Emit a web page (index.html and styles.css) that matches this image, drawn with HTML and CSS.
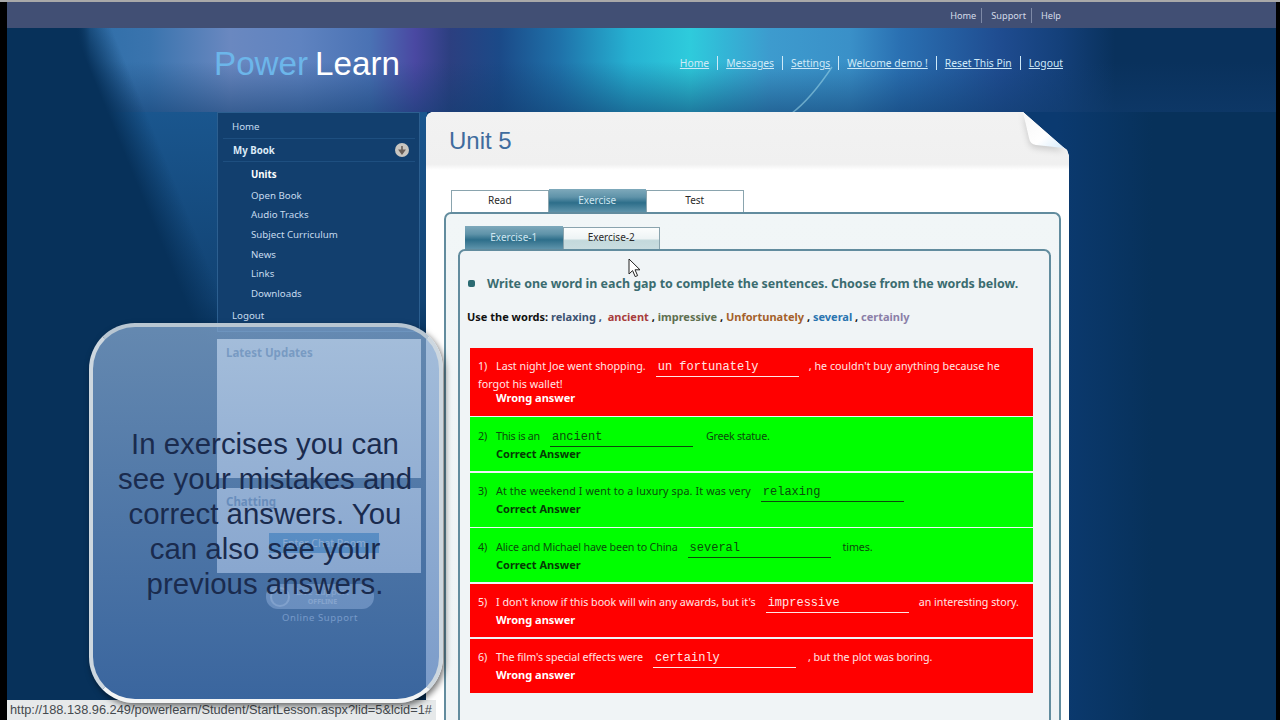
FILE: index.html
```html
<!DOCTYPE html>
<html lang="en">
<head>
<meta charset="utf-8">
<title>PowerLearn</title>
<link rel="stylesheet" href="styles.css">
</head>
<body>
<div class="screen">
  <div class="page">
    <div class="topbar">
      <a>Home</a><i></i><a>Support</a><i></i><a>Help</a>
    </div>
    <header class="header">
      <div class="logo"><span class="logo-a">Power</span><span class="logo-b">Learn</span></div>
      <nav class="nav">
        <a>Home</a><i></i><a>Messages</a><i></i><a>Settings</a><i></i><a>Welcome demo !</a><i></i><a>Reset This Pin</a><i></i><a>Logout</a>
      </nav>
      <svg class="streak" width="50" height="50" viewBox="0 0 50 50"><path d="M2 48C18 36 30 20 42 2" stroke="#9fd8ea" stroke-opacity=".55" stroke-width="1.4" fill="none"/></svg>
    </header>
    <div class="content">
      <aside class="side">
        <div class="menu">
          <div class="menu-item">Home</div>
          <div class="menu-open">My Book
            <svg class="down" width="14" height="14" viewBox="0 0 14 14"><circle cx="7" cy="7" r="7" fill="#c9c6c0"/><path d="M7 3v6M4.6 7.2 7 10.6l2.4-3.4z" stroke="#6a5f58" stroke-width="1.6" fill="#6a5f58"/></svg>
          </div>
          <ul class="sub">
            <li class="cur">Units</li>
            <li>Open Book</li>
            <li>Audio Tracks</li>
            <li>Subject Curriculum</li>
            <li>News</li>
            <li>Links</li>
            <li>Downloads</li>
          </ul>
          <div class="menu-item">Logout</div>
        </div>
        <section class="box updates"><h3>Latest Updates</h3></section>
        <section class="box chat"><h3>Chatting</h3><div class="chat-btn">Enter Chat Room</div></section>
        <div class="live">
          <div class="pill"><span class="ring"></span><span class="pill-t"><b>Live Support</b><small>OFFLINE</small></span></div>
          <div class="live-cap">Online Support</div>
        </div>
      </aside>
      <main class="main">
        <svg class="fold" width="46" height="44" viewBox="0 0 46 44"><defs><linearGradient id="f" x1="0" y1="0" x2="1" y2="1"><stop offset="0" stop-color="#f7f7f7"/><stop offset=".6" stop-color="#fff"/><stop offset="1" stop-color="#d6ebfb"/></linearGradient></defs><path d="M0 0 6 26Q7 32 13 33L41 36Z" fill="url(#f)"/></svg>
        <div class="title"><h1>Unit 5</h1></div>
        <div class="tabs">
          <div class="tab">Read</div><div class="tab on">Exercise</div><div class="tab">Test</div>
        </div>
        <div class="outer">
          <div class="tabs2">
            <div class="tab2 on">Exercise-1</div><div class="tab2">Exercise-2</div>
          </div>
          <div class="inner">
            <div class="lead"><span class="bullet"></span>Write one word in each gap to complete the sentences. Choose from the words below.</div>
            <p class="words">Use the words: <span class="w1">relaxing ,</span>&nbsp; <span class="w2">ancient</span> , <span class="w3">impressive</span> , <span class="w4">Unfortunately</span> , <span class="w5">several</span> , <span class="w6">certainly</span></p>
            <div class="row bad r1">
              <p><span class="n">1)</span>Last night Joe went shopping.<span class="gap">un fortunately</span>, he couldn't buy anything because he forgot his wallet!</p>
              <div class="ans">Wrong answer</div>
            </div>
            <div class="row ok r2">
              <p><span class="n">2)</span>This is an<span class="gap">ancient</span>Greek statue.</p>
              <div class="ans">Correct Answer</div>
            </div>
            <div class="row ok r3">
              <p><span class="n">3)</span>At the weekend I went to a luxury spa. It was very<span class="gap">relaxing</span></p>
              <div class="ans">Correct Answer</div>
            </div>
            <div class="row ok r4">
              <p><span class="n">4)</span>Alice and Michael have been to China<span class="gap">several</span>times.</p>
              <div class="ans">Correct Answer</div>
            </div>
            <div class="row bad">
              <p><span class="n">5)</span>I don't know if this book will win any awards, but it's<span class="gap">impressive</span>an interesting story.</p>
              <div class="ans">Wrong answer</div>
            </div>
            <div class="row bad r6">
              <p><span class="n">6)</span>The film's special effects were<span class="gap">certainly</span>, but the plot was boring.</p>
              <div class="ans">Wrong answer</div>
            </div>
          </div>
        </div>
      </main>
    </div>
  </div>
  <div class="status">http://188.138.96.249/powerlearn/Student/StartLesson.aspx?lid=5&amp;lcid=1#</div>
  <div class="callout"><p>In exercises you can see your mistakes and correct answers. You can also see your previous answers.</p></div>
  <svg class="cursor" width="13" height="20" viewBox="0 0 13 20"><path d="M1 1v15l3.6-3.4 2.6 6 2.4-1-2.6-5.8H12z" fill="#fff" stroke="#222" stroke-width="1"/></svg>
</div>
</body>
</html>
```
FILE: styles.css
```css
* { box-sizing: border-box; }
html, body { margin: 0; padding: 0; background: #000; }
.screen {
  position: relative; width: 1280px; height: 720px; overflow: hidden;
  background: #000; padding: 2px 4px 0 7px;
  font-family: "Noto Sans", "Liberation Sans", sans-serif;
}
.screen::before { content: ""; position: absolute; left: 0; right: 0; top: 0; height: 2px; background: #a9a9a9; }
.page {
  position: relative; height: 718px; overflow: hidden;
  background:
    linear-gradient(67.6deg, #07315a 192px, rgba(7,49,90,0) 228px) 0 26px / 260px 345px no-repeat,
    linear-gradient(180deg, rgba(16,60,110,0) 40%, rgba(16,60,110,.55) 100%) 0 26px / 100% 84px no-repeat,
    linear-gradient(90deg, #07315a 70px, #2f6ea8 83px, #3a74ae 143px, #6a88c0 223px, #5f83c0 293px, #4a72b4 363px, #4a48a2 408px, #2c3f80 443px, #1b4a88 493px, #1f72aa 553px, #26b2d2 623px, #2ecbdc 683px, #33b5d6 718px, #3d9bce 763px, #3a90c8 843px, #2a70b2 893px, #1f4c90 993px, #14407a 1053px, #09315c 1108px) 0 26px / 100% 84px no-repeat,
    linear-gradient(180deg, #1a568e 0, #1a568e 110px, #114272 300px, #07315a 345px) 0 0 / 420px 100% no-repeat,
    linear-gradient(90deg, #0b3a70 1050px, #07315a 1145px);
}
.topbar {
  position: relative; height: 26px; background: #414f74;
  display: flex; align-items: center; justify-content: flex-end;
  padding-right: 215px;
  font-size: 9.2px; color: #d4dbe8;
}
.topbar i { width: 1px; height: 15px; margin: 0 9px 0 5px; background: #7d89a6; }
.header { position: relative; height: 84px; display: flex; align-items: flex-start; padding: 16px 213px 0 207px; }
.streak { position: absolute; left: 783px; top: 37px; }
.logo { display: flex; gap: 7px; font: 33.2px/40px "Liberation Sans", sans-serif; }
.logo-a { color: #6cb6ea; }
.logo-b { color: #fff; }
.nav { margin-left: auto; display: flex; align-items: center; gap: 8px; height: 38px; font-size: 10.3px; color: #cfeaf8; }
.nav a { text-decoration: underline; }
.nav i { width: 1px; height: 14px; background: #cfeaf8; }
.content { position: relative; display: flex; gap: 6px; padding-left: 210px; align-items: flex-start; }
.side { width: 203px; flex: none; }
.menu { width: 203px; height: 220px; background: #123f6e; border: 1px solid #2c5f90; padding-top: 1px; font-size: 9.7px; color: #c6dbee; }
.menu-item { height: 24px; line-height: 25px; padding-left: 14px; }
.menu-open {
  height: 24px; margin: 0 4px 0 5px; padding: 0 6px 0 10px;
  display: flex; align-items: center; justify-content: space-between;
  font-weight: 700; color: #dcebf7;
  border-top: 1px solid #1e4f80; border-bottom: 1px solid #1e4f80;
}
.sub { list-style: none; margin: 0; padding: 3px 0 0 33px; }
.sub li { height: 19.6px; line-height: 19.6px; }
.sub .cur { font-weight: 700; color: #fff; margin-bottom: 1.2px; }
.box { width: 204px; background: #fff; }
.box h3 { margin: 0; font: 700 11.5px/20px "Noto Sans", sans-serif; color: #5f80a6; padding: 4px 0 0 9px; }
.updates { height: 139px; margin-top: 7px; }
.chat { height: 85px; margin-top: 10px; position: relative; }
.chat-btn { margin: 21px 42px 0 52px; height: 20px; background: #368ecc; color: #fff; font-size: 10.5px; line-height: 20px; text-align: center; }
.live { margin: 11px 0 0 49px; width: 108px; }
.pill { height: 25px; border-radius: 12px; background: rgba(200,215,235,.75); display: flex; align-items: center; padding-left: 4px; gap: 6px; }
.ring { width: 20px; height: 20px; border-radius: 50%; border: 2px solid #eef3f9; }
.pill-t { display: flex; flex-direction: column; align-items: center; color: #fff; line-height: 10px; }
.pill-t b { font-size: 9px; font-weight: 400; }
.pill-t small { font-size: 7px; font-weight: 700; }
.live-cap { margin-top: 3px; font-size: 9.5px; line-height: 12px; letter-spacing: .6px; color: #c8d9ec; text-align: center; }
.main {
  position: relative; width: 643px; height: 608px; flex: none; background: #fff;
  padding: 0 8px 0 18px;
  clip-path: polygon(0 6px, 2px 2px, 6px 0, 597px 0, 637px 35px, 641px 38px, 643px 44px, 643px 100%, 0 100%);
}
.fold { position: absolute; left: 597px; top: 0; filter: drop-shadow(0 3px 3px rgba(0,0,0,.16)); }
.title { height: 58px; margin: 0 -8px 0 -18px; padding-left: 23px; background: linear-gradient(180deg, #f2f2f2 0, #f0f0f0 90%, #fff 100%); }
.title h1 { margin: 0; font: 400 24px/58px "Liberation Sans", sans-serif; color: #3f6c9e; }
.tabs { display: flex; margin: 19px 0 0 7px; height: 23px; align-items: flex-end; }
.tab { width: 97.5px; height: 22px; border: 1px solid #8aa4ae; border-bottom: 0; background: #fff; text-align: center; font-size: 10px; line-height: 19px; color: #2a2a2a; }
.tab.on, .tab2.on { height: 23px; border: 0; background: linear-gradient(180deg, #7ea9bb 0, #5f93a9 35%, #2d6e8a 60%, #5e93aa 100%); color: #cfe6f0; line-height: 23px; }
.outer { border: 2px solid #628c9e; border-bottom: 0; border-radius: 7px 7px 0 0; height: 510px; padding: 12px 8px 0 12px; background: linear-gradient(180deg, #f1f6f7, #eef3f5); }
.tabs2 { display: flex; margin-left: 7px; height: 23px; align-items: flex-end; }
.tab2 { width: 97.5px; height: 22px; border: 1px solid #8aa4ae; border-bottom: 0; background: linear-gradient(180deg, #fbfdfd 0, #eef4f5 50%, #c3d9dc 60%, #c9dde0 100%); text-align: center; font-size: 10px; line-height: 19px; color: #2a2a2a; }
.inner { border: 2px solid #628c9e; border-bottom: 0; border-radius: 7px 7px 0 0; height: 480px; padding: 23px 16px 0 10px; background: #f0f4f6; }
.lead { position: relative; height: 20px; margin-left: 17px; font-weight: 700; font-size: 12.45px; line-height: 20px; color: #3b6c70; white-space: nowrap; }
.bullet { position: absolute; left: -19px; top: 6px; width: 7px; height: 7px; border-radius: 2px; background: #2b6a72; }
.words { margin: 13px 0 0 -3px; height: 20px; font-weight: 700; font-size: 11px; line-height: 20px; color: #111; white-space: nowrap; }
.w1 { color: #3d5272; } .w2 { color: #a83c3c; } .w3 { color: #5f7050; }
.w4 { color: #a4602a; } .w5 { color: #2a74b0; } .w6 { color: #8b7fa8; }
.row { margin: 0 0 1.4px; padding: 11.4px 14px 10.6px 8px; font-size: 10.7px; line-height: 14px; }
.words + .row { margin-top: 21px; }
.row p { margin: 0; }
.r1 p { letter-spacing: .04px; }
.r2 p { letter-spacing: -.25px; }
.r3 p { letter-spacing: .13px; }
.r4 p { letter-spacing: -.14px; }
.r6 p { letter-spacing: -.05px; }
.bad { background: #ff0000; color: #ffe6e6; }
.ok { background: #00ff00; color: #0c4a0c; }
.n { display: inline-block; width: 18px; letter-spacing: 0; }
.gap { display: inline-block; width: 143px; margin: 0 10px; padding: 0 0 2px 2px; border-bottom: 1px solid currentColor; font: 12px/14px "Liberation Mono", monospace; letter-spacing: 0; vertical-align: baseline; }
.r2 .gap { margin-right: 13px; }
.r4 .gap, .r6 .gap { margin-right: 12px; }
.ans { padding-left: 18px; font-weight: 700; font-size: 11px; line-height: 14px; }
.bad .ans { color: #fff; }
.ok .ans { color: #063a06; }
.status {
  position: absolute; left: 7px; top: 700px; width: 429px; height: 20px;
  background: #e6e9ea; color: #454a4e; padding-left: 3px;
  font: 12.8px/20px "Liberation Sans", sans-serif; white-space: nowrap; overflow: hidden;
}
.callout {
  position: absolute; left: 89px; top: 323px; width: 354px; height: 380px;
  border: 4px solid; border-color: #b8c6d2 #cdd7df #f2f4f5;
  border-radius: 46px;
  background: linear-gradient(180deg, rgba(133,167,206,.74), rgba(76,120,182,.74));
  box-shadow: 2px 3px 6px rgba(0,0,0,.55);
  display: flex; align-items: center; justify-content: center;
  padding-right: 2px;
}
.callout p { margin: 0; width: 312px; text-align: center; font: 29.4px/35px "Liberation Sans", sans-serif; color: #1a2b4e; }
.cursor { position: absolute; left: 628px; top: 258px; }
```
